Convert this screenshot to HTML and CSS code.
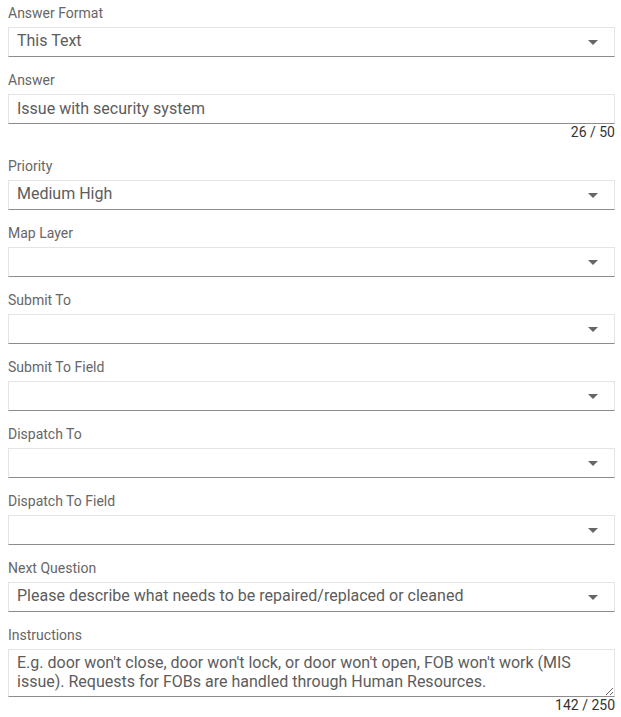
FILE: index.html
```html
<!DOCTYPE html>
<html>
<head>
<meta charset="utf-8">
<link rel="stylesheet" href="styles.css">
</head>
<body>
<div class="form">
  <div class="group">
    <div class="label">Answer Format</div>
    <div class="select"><span class="value">This Text</span><svg class="arrow" width="10" height="5" viewBox="0 0 10 5"><path d="M0 0L5 5L10 0Z"/></svg></div>
  </div>
  <div class="group">
    <div class="label">Answer</div>
    <div class="input"><span class="value">Issue with security system</span></div>
    <div class="counter">26 / 50</div>
  </div>
  <div class="group">
    <div class="label">Priority</div>
    <div class="select"><span class="value">Medium High</span><svg class="arrow" width="10" height="5" viewBox="0 0 10 5"><path d="M0 0L5 5L10 0Z"/></svg></div>
  </div>
  <div class="group">
    <div class="label">Map Layer</div>
    <div class="select"><span class="value"></span><svg class="arrow" width="10" height="5" viewBox="0 0 10 5"><path d="M0 0L5 5L10 0Z"/></svg></div>
  </div>
  <div class="group">
    <div class="label">Submit To</div>
    <div class="select"><span class="value"></span><svg class="arrow" width="10" height="5" viewBox="0 0 10 5"><path d="M0 0L5 5L10 0Z"/></svg></div>
  </div>
  <div class="group">
    <div class="label">Submit To Field</div>
    <div class="select"><span class="value"></span><svg class="arrow" width="10" height="5" viewBox="0 0 10 5"><path d="M0 0L5 5L10 0Z"/></svg></div>
  </div>
  <div class="group">
    <div class="label">Dispatch To</div>
    <div class="select"><span class="value"></span><svg class="arrow" width="10" height="5" viewBox="0 0 10 5"><path d="M0 0L5 5L10 0Z"/></svg></div>
  </div>
  <div class="group">
    <div class="label">Dispatch To Field</div>
    <div class="select"><span class="value"></span><svg class="arrow" width="10" height="5" viewBox="0 0 10 5"><path d="M0 0L5 5L10 0Z"/></svg></div>
  </div>
  <div class="group">
    <div class="label">Next Question</div>
    <div class="select"><span class="value">Please describe what needs to be repaired/replaced or cleaned</span><svg class="arrow" width="10" height="5" viewBox="0 0 10 5"><path d="M0 0L5 5L10 0Z"/></svg></div>
  </div>
  <div class="group">
    <div class="label">Instructions</div>
    <textarea class="textarea">E.g. door won't close, door won't lock, or door won't open, FOB won't work (MIS issue). Requests for FOBs are handled through Human Resources.</textarea>
    <div class="counter">142 / 250</div>
  </div>
</div>
</body>
</html>
```
FILE: styles.css
```css
html, body {
  margin: 0;
  padding: 0;
  background: #ffffff;
}
body {
  font-family: Roboto, "Liberation Sans", Arial, sans-serif;
}
.form {
  padding: 3px 6px 0 8px;
  display: flex;
  flex-direction: column;
  gap: 13px;
}
.group {
  display: flex;
  flex-direction: column;
}
.label {
  font-size: 14px;
  line-height: 20px;
  color: #666666;
  margin-bottom: 4px;
}
.select, .input {
  box-sizing: border-box;
  height: 30px;
  display: flex;
  align-items: flex-start;
  border: 1px solid #e4e4e4;
  border-bottom-color: #8c8c8c;
  padding: 3px 16px 5px 8px;
}
.input {
  padding-top: 4px;
  padding-bottom: 4px;
}
.value {
  flex: 1;
  font-size: 16px;
  line-height: 20px;
  color: #5c5c5c;
  white-space: nowrap;
  overflow: hidden;
}
.arrow {
  margin-top: 9px;
  fill: #666666;
}
.counter {
  font-size: 14px;
  line-height: 17px;
  padding-bottom: 2px;
  text-align: right;
  color: #333333;
}
.textarea {
  box-sizing: border-box;
  display: block;
  width: 100%;
  height: 48px;
  margin: 0;
  border: 1px solid #e4e4e4;
  border-bottom-color: #8c8c8c;
  border-radius: 0;
  padding: 3px 8px 3px 8px;
  font-family: Roboto, "Liberation Sans", Arial, sans-serif;
  font-size: 16px;
  line-height: 19px;
  color: #5c5c5c;
  resize: vertical;
  overflow: hidden;
  outline: none;
}
```
